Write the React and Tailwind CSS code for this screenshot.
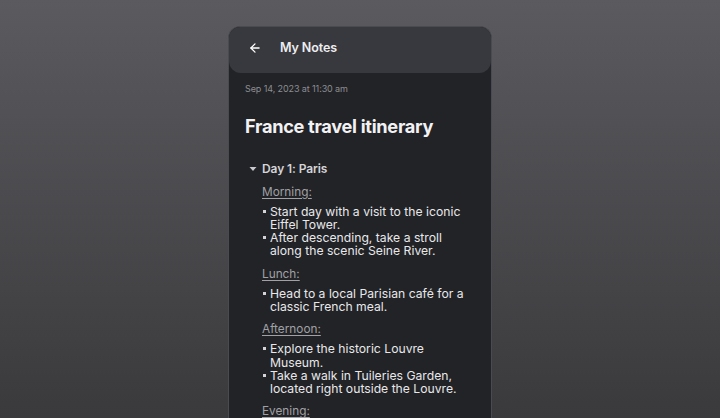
import { ArrowLeft } from "lucide-react";

const sections = [
  {
    title: "Morning:",
    items: [
      "Start day with a visit to the iconic Eiffel Tower.",
      "After descending, take a stroll along the scenic Seine River.",
    ],
  },
  {
    title: "Lunch:",
    items: ["Head to a local Parisian café for a classic French meal."],
  },
  {
    title: "Afternoon:",
    items: [
      "Explore the historic Louvre Museum.",
      "Take a walk in Tuileries Garden, located right outside the Louvre.",
    ],
  },
  {
    title: "Evening:",
    items: ["Enjoy dinner at a bistro in Montmartre."],
  },
];

const App = () => {
  return (
    <div
      className="h-[418px] w-full overflow-hidden bg-gradient-to-b from-[#5b5b5f] to-[#3a3a3d] flex justify-center pt-[26px]"
      style={{ fontFamily: "Inter, 'Open Sans', sans-serif" }}
    >
      <div className="w-[264px] shrink-0 rounded-t-[12px] bg-[#222326] border border-[#4a4b50] border-b-0 overflow-hidden">
        {/* Header */}
        <div className="h-[46px] bg-[#38393e] rounded-b-[12px] flex items-center pb-[4px] pl-[19px] pr-[18px] gap-[18px]">
          <ArrowLeft className="h-[14px] w-[14px] text-white" strokeWidth={2.2} />
          <span className="text-[12.5px] font-semibold text-[#ededf0] tracking-[-0.1px]">My Notes</span>
        </div>

        <div className="px-[16px]">
          <p className="mt-[9px] text-[9px] text-[#8d8d92] tracking-[-0.1px]">Sep 14, 2023 at 11:30 am</p>
          <h1 className="mt-[17px] text-[18.2px] font-bold text-[#f2f2f4] tracking-[-0.3px] leading-[26px]">
            France travel itinerary
          </h1>

          <div className="mt-[21px] flex items-center gap-[5px]">
            <svg width="8" height="6" viewBox="0 0 8 6" className="ml-[4px]">
              <path d="M0.5 1 L7.5 1 L4 5 Z" fill="#c9c9cd" />
            </svg>
            <span className="text-[12px] font-semibold text-[#d4d4d8] tracking-[-0.1px]">Day 1: Paris</span>
          </div>

          <div className="pl-[17px] pr-[7px]">
            {sections.map((s) => (
              <div key={s.title} className="mt-[6px]">
                <p className="text-[11.8px] text-[#a0a0a5] underline underline-offset-2 leading-[16px]">
                  {s.title}
                </p>
                <ul className="mt-[5px] mb-[8px]">
                  {s.items.map((it) => (
                    <li key={it} className="flex text-[12.2px] leading-[13.3px] text-[#e8e8eb]">
                      <span className="w-[8px] shrink-0 pt-[5px] pl-[1px]">
                        <span className="block h-[3px] w-[3px] bg-[#d4d4d8]" />
                      </span>
                      <span>{it}</span>
                    </li>
                  ))}
                </ul>
              </div>
            ))}
          </div>
        </div>
      </div>
    </div>
  );
};

export default App;
